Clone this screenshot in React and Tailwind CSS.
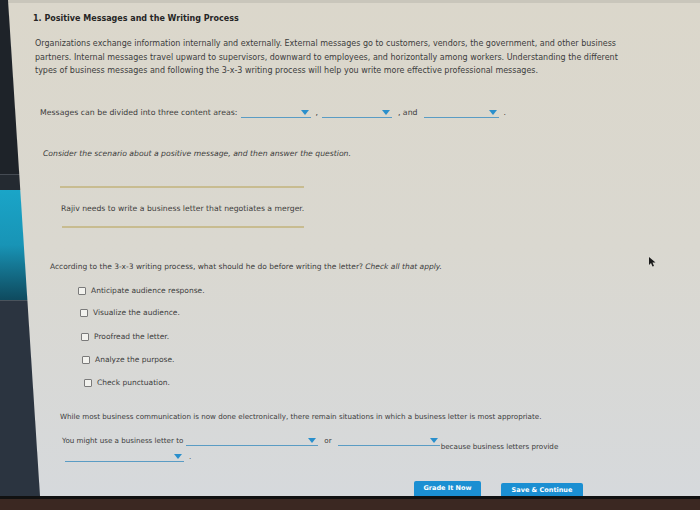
import React from "react";

function Arrow() {
  return (
    <svg width="8" height="5" viewBox="0 0 8 5" className="absolute right-[2px] top-[1px]">
      <polygon points="0,0 8,0 4,5" fill="#2a8fcc" />
    </svg>
  );
}

function Drop({ w }) {
  return (
    <span className={`relative inline-block h-[9px] border-b border-[#5a9cc4] ${w}`}>
      <Arrow />
    </span>
  );
}

function Check({ ml, label, mt }) {
  return (
    <div className={`flex items-center h-[12px] ${ml} ${mt}`}>
      <span className="w-[8px] h-[8px] border border-[#7a7a7a] bg-[#f2f2ee] rounded-[1px] mr-[5px]" />
      <span>{label}</span>
    </div>
  );
}

export default function App() {
  return (
    <div
      className="w-[700px] h-[510px] flex flex-col overflow-hidden bg-[#3a2721] text-[#3c3c3c]"
      style={{ fontFamily: '"DejaVu Sans", Verdana, sans-serif' }}
    >
      <div className="h-[496px] shrink-0 flex bg-linear-to-b from-[#dbd7cb] via-[#dad8d0] to-[#d6d9dc] overflow-hidden relative">
        <aside className="w-[40px] shrink-0 flex flex-col [clip-path:polygon(0_0,8px_0,40px_100%,0_100%)]">
          <div className="h-[174px] bg-[#1e2329]" />
          <div className="h-[1px] bg-[#454b53]" />
          <div className="h-[15px] bg-[#242a31]" />
          <div className="h-[110px] bg-linear-to-b from-[#1aa5c8] via-[#1894b6] to-[#0e4a5e]" />
          <div className="h-[1px] bg-[#4a535c]" />
          <div className="flex-1 bg-[#2b3440]" />
        </aside>
        <main className="-ml-[32px] flex-1 flex flex-col overflow-hidden text-[7.5px] *:shrink-0">
          <div className="h-[3px] bg-[#c9c6bb]" />
          <div className="ml-[25px] mt-[10px] leading-[12px] font-bold text-[#262626] text-[8px] whitespace-nowrap">
            1. Positive Messages and the Writing Process
          </div>
          <p className="ml-[27px] mt-[12px] leading-[13.5px] text-[8px] whitespace-nowrap">
            Organizations exchange information internally and externally. External messages go to customers, vendors, the government, and other business
            <br />
            partners. Internal messages travel upward to supervisors, downward to employees, and horizontally among workers. Understanding the different
            <br />
            types of business messages and following the 3-x-3 writing process will help you write more effective professional messages.
          </p>
          <div className="ml-[32px] mt-[26px] h-[14px] flex items-end whitespace-nowrap leading-[10px] text-[7.8px]">
            <span className="mr-[4px]">Messages can be divided into three content areas:</span>
            <Drop w="w-[70px]" />
            <span className="mx-[4px]">,</span>
            <Drop w="w-[70px]" />
            <span className="mx-[6px]">, and</span>
            <Drop w="w-[75px]" />
            <span className="ml-[5px]">.</span>
          </div>
          <div className="ml-[35px] mt-[30px] leading-[12px] italic text-[7.7px] whitespace-nowrap">
            Consider the scenario about a positive message, and then answer the question.
          </div>
          <div className="ml-[52px] mt-[26px] w-[244px] h-[2px] bg-[#c8bc90]" />
          <div className="ml-[53px] mt-[15px] leading-[12px] text-[7.7px] whitespace-nowrap">
            Rajiv needs to write a business letter that negotiates a merger.
          </div>
          <div className="ml-[54px] mt-[11px] w-[242px] h-[2px] bg-[#c8bc90]" />
          <div className="ml-[42px] mt-[33px] leading-[12px] whitespace-nowrap">
            According to the 3-x-3 writing process, what should he do before writing the letter? <i>Check all that apply.</i>
          </div>
          <Check ml="ml-[70px]" mt="mt-[12px]" label="Anticipate audience response." />
          <Check ml="ml-[72px]" mt="mt-[10px]" label="Visualize the audience." />
          <Check ml="ml-[73px]" mt="mt-[12px]" label="Proofread the letter." />
          <Check ml="ml-[74px]" mt="mt-[11px]" label="Analyze the purpose." />
          <Check ml="ml-[76px]" mt="mt-[11px]" label="Check punctuation." />
          <div className="ml-[52px] mt-[22px] leading-[12px] text-[7.15px] whitespace-nowrap">
            While most business communication is now done electronically, there remain situations in which a business letter is most appropriate.
          </div>
          <div className="ml-[54px] mt-[9px] h-[14px] flex items-end whitespace-nowrap leading-[10px] text-[7.15px]">
            <span className="mr-[3px]">You might use a business letter to</span>
            <Drop w="w-[132px]" />
            <span className="mx-[6px]">or</span>
            <Drop w="w-[102px]" />
            <span className="ml-[1px] translate-y-[6px]">because business letters provide</span>
          </div>
          <div className="ml-[57px] mt-[6px] h-[10px] flex items-end leading-[10px] text-[7.15px]">
            <Drop w="w-[119px]" />
            <span className="ml-[5px]">.</span>
          </div>
          <div className="ml-[406px] mt-[19px] flex gap-[20px]">
            <button className="w-[67px] h-[17px] bg-[#1b8fd2] rounded-[2px] text-white font-bold text-[6.5px]">
              Grade It Now
            </button>
            <button className="w-[82px] h-[16px] mt-[2px] bg-[#1b8fd2] rounded-[2px] text-white font-bold text-[6.5px]">
              Save &amp; Continue
            </button>
          </div>
        </main>
        <svg width="7" height="10" viewBox="0 0 7 10" className="absolute left-[649px] top-[257px]">
          <polygon points="0,0 0,8 2,6 3.5,9.5 5,9 3.5,5.5 6.5,5.5" fill="#1a1a1a" />
        </svg>
      </div>
      <div className="h-[3px] shrink-0 bg-[#111]" />
      <div className="flex-1 bg-[#3b2822]" />
    </div>
  );
}
